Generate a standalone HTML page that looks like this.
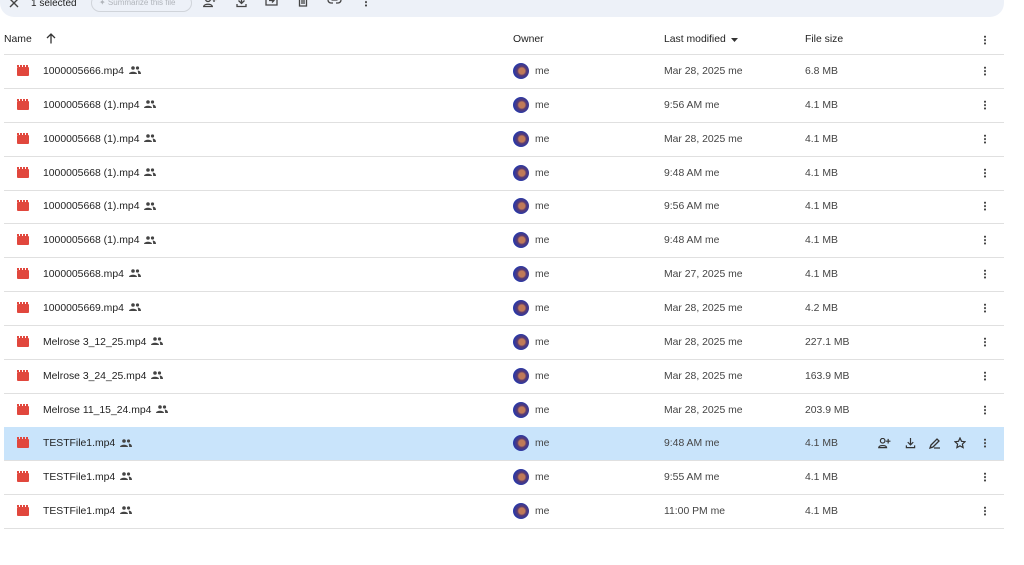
<!DOCTYPE html><html><head><style>
body{margin:0;width:1024px;height:565px;background:#fff;font-family:"Liberation Sans",sans-serif;overflow:hidden;position:relative;color:#1f1f1f}
.bar{position:absolute;left:0;top:-10px;width:1004px;height:27px;background:#edf1f8;border-radius:0 0 14px 14px}
.t{position:absolute;font-size:10.4px;white-space:nowrap}
.hdr{position:absolute;left:4px;top:54px;width:1000px;border-top:1px solid #e0e0e0}
.row{position:absolute;left:4px;width:1000px;height:33px;border-bottom:1px solid #e0e0e0}
.row.sel{background:#c9e4fb}
.ic{position:absolute;left:13px;top:12px;width:12px;height:9px;background:#e1473d;border-radius:1px}
.ic:before{content:"";position:absolute;left:0;top:-2px;width:12px;height:2px;background:repeating-linear-gradient(90deg,#e1473d 0 2px,transparent 2px 3px)}
.av{position:absolute;left:509px;top:8px;width:16px;height:16px;border-radius:50%;background:radial-gradient(circle at 55% 50%,#c07a58 0 3px,#5a3a70 4.5px,#2838a8 8px)}
.dots{position:absolute;left:980px;top:11px;width:2px;height:10px;background:radial-gradient(circle,#444 0.9px,transparent 1.2px) 0 0/2px 3.4px}
svg{position:absolute}
.sh{position:relative;display:inline-block;vertical-align:middle;margin-left:5px;top:-1px}
</style></head><body>
<div class="bar"></div>
<svg style="left:9px;top:-2px" width="10" height="10" viewBox="0 0 10 10"><path d="M1 1L9 9M9 1L1 9" stroke="#444" stroke-width="1.4"/></svg>
<div class="t" style="left:31px;top:-2px;font-size:10px">1 selected</div>
<div style="position:absolute;left:91px;top:-6px;width:99px;height:16px;border:1px solid #d0d4da;border-radius:9px"></div>
<div class="t" style="left:99px;top:-2px;font-size:8px;color:#b0b4ba">✦ Summarize this file</div>
<svg style="left:203px;top:-4px" width="14" height="12" viewBox="0 0 14 12"><circle cx="5" cy="3" r="2.5" fill="none" stroke="#444" stroke-width="1.3"/><path d="M0.7 10.5C1 7.5 9 7.5 9.3 10.5Z" fill="none" stroke="#444" stroke-width="1.3"/><path d="M11 1v5M8.5 3.5h5" stroke="#444" stroke-width="1.3"/></svg>
<svg style="left:236px;top:-4px" width="11" height="12" viewBox="0 0 11 12"><path d="M5.5 0v7M2.5 4.5l3 3 3-3M1 8v2.5h9V8" fill="none" stroke="#444" stroke-width="1.3"/></svg>
<svg style="left:265px;top:-4px" width="13" height="12" viewBox="0 0 13 12"><path d="M1 0v9h11V0M4 4.5h5M7 2.5l2 2-2 2" fill="none" stroke="#444" stroke-width="1.3"/></svg>
<svg style="left:298px;top:-4px" width="10" height="12" viewBox="0 0 10 12"><path d="M1.5 0v10h7V0M4 2v6M6 2v6" fill="none" stroke="#444" stroke-width="1.3"/></svg>
<svg style="left:327px;top:-4px" width="15" height="10" viewBox="0 0 15 10"><path d="M6 1H4a3 3 0 000 6h2M9 1h2a3 3 0 010 6H9M4.5 4h6" fill="none" stroke="#444" stroke-width="1.3"/></svg>
<div class="dots" style="left:365px;top:-3px"></div>
<div class="t" style="left:4px;top:34px">Name</div>
<svg style="left:46px;top:33px" width="10" height="11" viewBox="0 0 10 11"><path d="M5 10.5V1M1 5l4-4 4 4" fill="none" stroke="#333" stroke-width="1.3"/></svg>
<div class="t" style="left:513px;top:34px">Owner</div>
<div class="t" style="left:664px;top:34px">Last modified</div>
<svg style="left:731px;top:38px" width="7" height="4" viewBox="0 0 7 4"><path d="M0 0h7L3.5 4z" fill="#333"/></svg>
<div class="t" style="left:805px;top:34px">File size</div>
<div class="dots" style="left:984px;top:35px"></div>
<div class="hdr"></div>
<div id="r"></div>
<script>
var sh='<svg class="sh" width="12" height="8" viewBox="0 0 12 8"><circle cx="4" cy="2" r="1.8" fill="#444"/><circle cx="8.5" cy="2" r="1.6" fill="#444"/><path d="M0 8c0-3 8-3 8 0z" fill="#444"/><path d="M8.6 4.6c1.6 0 3.4.8 3.4 3.4H9.2c0-1.4-.3-2.6-.6-3.4z" fill="#444"/></svg>';
var d=[["1000005666.mp4","Mar 28, 2025 me","6.8 MB"],["1000005668 (1).mp4","9:56 AM me","4.1 MB"],["1000005668 (1).mp4","Mar 28, 2025 me","4.1 MB"],["1000005668 (1).mp4","9:48 AM me","4.1 MB"],["1000005668 (1).mp4","9:56 AM me","4.1 MB"],["1000005668 (1).mp4","9:48 AM me","4.1 MB"],["1000005668.mp4","Mar 27, 2025 me","4.1 MB"],["1000005669.mp4","Mar 28, 2025 me","4.2 MB"],["Melrose 3_12_25.mp4","Mar 28, 2025 me","227.1 MB"],["Melrose 3_24_25.mp4","Mar 28, 2025 me","163.9 MB"],["Melrose 11_15_24.mp4","Mar 28, 2025 me","203.9 MB"],["TESTFile1.mp4","9:48 AM me","4.1 MB"],["TESTFile1.mp4","9:55 AM me","4.1 MB"],["TESTFile1.mp4","11:00 PM me","4.1 MB"]];
var acts='<svg style="left:874px;top:11px" width="13" height="11" viewBox="0 0 14 12"><circle cx="5" cy="3" r="2.5" fill="none" stroke="#333" stroke-width="1.3"/><path d="M0.7 10.5C1 7.5 9 7.5 9.3 10.5Z" fill="none" stroke="#333" stroke-width="1.3"/><path d="M11 1v5M8.5 3.5h5" stroke="#333" stroke-width="1.3"/></svg>'+
'<svg style="left:901px;top:11px" width="11" height="11" viewBox="0 0 11 12"><path d="M5.5 0v7M2.5 4.5l3 3 3-3M1 8v2.5h9V8" fill="none" stroke="#333" stroke-width="1.3"/></svg>'+
'<svg style="left:925px;top:11px" width="12" height="11" viewBox="0 0 12 11"><path d="M1 10l1-3 6-6 2 2-6 6zM5 10h6" fill="none" stroke="#333" stroke-width="1.3"/></svg>'+
'<svg style="left:950px;top:10px" width="12" height="12" viewBox="0 0 12 12"><path d="M6 1l1.5 3.3 3.5.4-2.6 2.4.7 3.5L6 8.8 2.9 10.6l.7-3.5L1 4.7l3.5-.4z" fill="none" stroke="#333" stroke-width="1.2"/></svg>';
var h="";d.forEach(function(r,i){var y=55+i*33.85;
h+='<div class="row'+(i==11?' sel':'')+'" style="top:'+y+'px"><div class="ic"></div><div class="t" style="left:39px;top:11px">'+r[0]+sh+'</div><div class="av"></div><div class="t" style="left:531px;top:11px;color:#444">me</div><div class="t" style="left:660px;top:11px;color:#444">'+r[1]+'</div><div class="t" style="left:801px;top:11px;color:#444">'+r[2]+'</div><div class="dots"></div>'+(i==11?acts:'')+'</div>';});
document.getElementById("r").innerHTML=h;
</script>
</body></html>
